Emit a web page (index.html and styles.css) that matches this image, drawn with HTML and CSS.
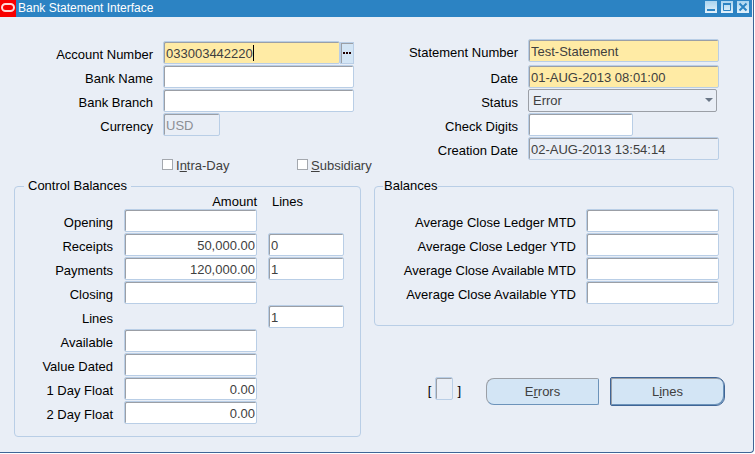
FILE: index.html
```html
<!DOCTYPE html>
<html lang="en">
<head>
    <meta charset="UTF-8">
    <title>Bank Statement Interface</title>
    <link rel="stylesheet" href="styles.css">
</head>
<body>
    <div class="window">
        <div class="title-bar">
            <svg class="logo" width="16" height="17" viewBox="0 0 16 17">
                <rect width="16" height="17" fill="#f80000"/>
                <rect x="2" y="4" width="12" height="7" rx="3.5" fill="none" stroke="#ffd9d9" stroke-width="2"/>
            </svg>
            <h1>Bank Statement Interface</h1>
            <div class="window-buttons">
                <button type="button" aria-label="Minimize">
                    <svg width="12" height="12" viewBox="0 0 12 12"><path d="M2 9h8" stroke="#2c83c3" stroke-width="2"/></svg>
                </button>
                <button type="button" aria-label="Maximize">
                    <svg width="12" height="12" viewBox="0 0 12 12"><path d="M2.5 3v6.5h7V3" fill="none" stroke="#2c83c3"/><path d="M2 3h8" stroke="#2c83c3" stroke-width="2"/></svg>
                </button>
                <button type="button" aria-label="Close">
                    <svg width="12" height="12" viewBox="0 0 12 12"><path d="M2.5 2.5l7 7M9.5 2.5l-7 7" stroke="#2c83c3" stroke-width="2"/></svg>
                </button>
            </div>
        </div>

        <form class="content">
            <div class="columns">
                <div class="account">
                    <div class="row">
                        <label for="account-number">Account Number</label>
                        <div class="lov">
                            <input class="required" id="account-number" type="text" value="033003442220">
                            <span class="caret"></span>
                            <button class="lov-button" type="button" aria-label="List of values">
                                <svg width="8" height="2" viewBox="0 0 8 2"><path d="M0 0h2v2H0zM3 0h2v2H3zM6 0h2v2H6z" fill="#200"/></svg>
                            </button>
                        </div>
                    </div>
                    <div class="row">
                        <label for="bank-name">Bank Name</label>
                        <input id="bank-name" type="text">
                    </div>
                    <div class="row">
                        <label for="bank-branch">Bank Branch</label>
                        <input id="bank-branch" type="text">
                    </div>
                    <div class="row">
                        <label for="currency">Currency</label>
                        <input class="short" id="currency" type="text" value="USD" disabled>
                    </div>
                    <div class="checks">
                        <label><input type="checkbox"><span>I<u>n</u>tra-Day</span></label>
                        <label><input type="checkbox"><span><u>S</u>ubsidiary</span></label>
                    </div>
                </div>

                <div class="statement">
                    <div class="row first">
                        <label for="statement-number">Statement Number</label>
                        <input class="required" id="statement-number" type="text" value="Test-Statement">
                    </div>
                    <div class="row">
                        <label for="date">Date</label>
                        <input class="required" id="date" type="text" value="01-AUG-2013 08:01:00">
                    </div>
                    <div class="row">
                        <label for="status">Status</label>
                        <div class="select">
                            <select id="status">
                                <option>Error</option>
                            </select>
                            <svg class="arrow" width="8" height="4" viewBox="0 0 8 4"><path d="M0 0h8L4 4z" fill="#6a7686"/></svg>
                        </div>
                    </div>
                    <div class="row">
                        <label for="check-digits">Check Digits</label>
                        <input class="medium" id="check-digits" type="text">
                    </div>
                    <div class="row">
                        <label for="creation-date">Creation Date</label>
                        <input id="creation-date" type="text" value="02-AUG-2013 13:54:14" readonly>
                    </div>
                </div>
            </div>

            <div class="columns">
                <fieldset class="control-balances">
                    <legend>Control Balances</legend>
                    <div class="balance-row heading">
                        <span></span>
                        <span class="amount-heading">Amount</span>
                        <span class="lines-heading">Lines</span>
                    </div>
                    <div class="balance-row">
                        <label for="opening">Opening</label>
                        <input id="opening" class="number" type="text">
                    </div>
                    <div class="balance-row">
                        <label for="receipts">Receipts</label>
                        <input id="receipts" class="number" type="text" value="50,000.00">
                        <input type="text" value="0" aria-label="Receipts lines">
                    </div>
                    <div class="balance-row">
                        <label for="payments">Payments</label>
                        <input id="payments" class="number" type="text" value="120,000.00">
                        <input type="text" value="1" aria-label="Payments lines">
                    </div>
                    <div class="balance-row">
                        <label for="closing">Closing</label>
                        <input id="closing" class="number" type="text">
                    </div>
                    <div class="balance-row">
                        <label for="total-lines">Lines</label>
                        <span></span>
                        <input id="total-lines" type="text" value="1">
                    </div>
                    <div class="balance-row">
                        <label for="available">Available</label>
                        <input id="available" class="number" type="text">
                    </div>
                    <div class="balance-row">
                        <label for="value-dated">Value Dated</label>
                        <input id="value-dated" class="number" type="text">
                    </div>
                    <div class="balance-row">
                        <label for="float-1">1 Day Float</label>
                        <input id="float-1" class="number" type="text" value="0.00">
                    </div>
                    <div class="balance-row">
                        <label for="float-2">2 Day Float</label>
                        <input id="float-2" class="number" type="text" value="0.00">
                    </div>
                </fieldset>

                <div class="side">
                    <fieldset class="balances">
                        <legend>Balances</legend>
                        <div class="average-row">
                            <label for="ledger-mtd">Average Close Ledger MTD</label>
                            <input id="ledger-mtd" class="number" type="text">
                        </div>
                        <div class="average-row">
                            <label for="ledger-ytd">Average Close Ledger YTD</label>
                            <input id="ledger-ytd" class="number" type="text">
                        </div>
                        <div class="average-row">
                            <label for="available-mtd">Average Close Available MTD</label>
                            <input id="available-mtd" class="number" type="text">
                        </div>
                        <div class="average-row">
                            <label for="available-ytd">Average Close Available YTD</label>
                            <input id="available-ytd" class="number" type="text">
                        </div>
                    </fieldset>

                    <div class="actions">
                        <div class="flexfield">
                            <span>[</span>
                            <input type="text" aria-label="Additional information" readonly>
                            <span>]</span>
                        </div>
                        <button class="action errors" type="button"><span>E<u>r</u>rors</span></button>
                        <button class="action default" type="button"><span>L<u>i</u>nes</span></button>
                    </div>
                </div>
            </div>
        </form>
    </div>
</body>
</html>
```
FILE: styles.css
```css
* {
    box-sizing: border-box;
}

body {
    margin: 0;
    background: #fff;
    font-family: "Liberation Sans", Arial, sans-serif;
    font-size: 13px;
    line-height: 16px;
    color: #000;
}

.window {
    margin-right: 1px;
    padding-bottom: 15px;
    background: #e9eef6;
    border-right: 1px solid #3f6596;
    border-bottom: 1px solid #3f6596;
    border-bottom-right-radius: 4px;
}

.title-bar {
    display: flex;
    align-items: center;
    height: 17px;
    margin-right: 1px;
    padding-right: 3px;
    background: #2c83c3;
    color: #fff;
}

.title-bar h1 {
    flex: 1;
    margin: 0 0 2px 2px;
    font-size: 12px;
    font-weight: normal;
}

.window-buttons {
    display: flex;
    gap: 4px;
    margin-bottom: 3px;
}

.window-buttons button {
    display: block;
    height: 12px;
    padding: 0;
    border: none;
    background: linear-gradient(#a9d3ef, #e4f2fb);
}

.window-buttons svg {
    display: block;
}

.content {
    padding: 0 19px 0 14px;
}

.columns {
    display: grid;
    grid-template-columns: minmax(0, 347fr) minmax(0, 360fr);
    gap: 13px;
}

input,
select {
    width: 100%;
    height: 23px;
    margin: 0;
    padding: 1px 2px 0;
    border: 1px solid #b9cee6;
    border-radius: 2px;
    background: #fff;
    box-shadow: inset 1px 1px 0 #9b9fa6;
    font: inherit;
    color: #404040;
    outline: none;
}

input[readonly],
input:disabled {
    background: #e9eef6;
}

input:disabled {
    color: #8c8f94;
}

input.required {
    background: #ffeba5;
}

input.short {
    width: 57px;
}

input.medium {
    width: 105px;
}

input.number {
    padding-right: 1px;
    text-align: right;
}

.row {
    display: grid;
    grid-template-columns: 1fr 191px;
    gap: 10px;
    align-items: center;
    margin-bottom: 1px;
}

.row label,
.balance-row label,
.average-row label {
    padding-top: 4px;
    text-align: right;
}

.account {
    padding: 24px 7px 0 0;
}

.statement {
    padding: 22px 15px 0 0;
}

.row.first {
    margin-bottom: 3px;
}

/* list of values field */
.lov {
    display: flex;
    position: relative;
}

.lov input {
    flex: 1;
    min-width: 0;
}

.caret {
    position: absolute;
    left: 90px;
    top: 4px;
    width: 1px;
    height: 16px;
    background: #000;
}

.lov-button {
    display: flex;
    align-items: center;
    justify-content: center;
    width: 14px;
    height: 22px;
    margin-top: 1px;
    padding: 0;
    border: 1px solid #b9cee6;
    background: #d3e5f5;
    box-shadow: inset 1px 1px 0 #9b9fa6;
}

.select {
    position: relative;
    padding-right: 2px;
}

.select select {
    display: block;
    padding-left: 4px;
    border-color: #9b9fa6;
    background: #e9eef6;
    box-shadow: none;
    appearance: none;
}

.arrow {
    position: absolute;
    right: 6px;
    top: 9px;
}

.checks {
    display: grid;
    grid-template-columns: 135px 1fr;
    margin: 22px 0 0 148px;
    color: #404040;
    white-space: nowrap;
}

.checks label {
    display: flex;
    align-items: center;
    gap: 3px;
}

.checks input {
    flex: none;
    width: 11px;
    height: 11px;
    margin-bottom: 4px;
    padding: 0;
    border: 1px solid #a4a8ae;
    border-radius: 0;
    box-shadow: none;
    appearance: none;
}

fieldset {
    min-width: 0;
    margin: 0;
    padding: 0;
    border: 1px solid #b9cee6;
    border-radius: 4px;
}

legend {
    margin-left: 9px;
    padding: 0 4px;
}

.control-balances {
    margin-top: 4px;
    padding-bottom: 11px;
}

.balance-row {
    display: grid;
    grid-template-columns: 1fr 133px 76px;
    column-gap: 11px;
    align-items: center;
    height: 23px;
    margin: 0 16px 1px 0;
}

.balance-row.heading {
    height: 14px;
}

.amount-heading {
    text-align: right;
}

.lines-heading {
    padding-left: 4px;
}

.side {
    padding-top: 4px;
}

.balances {
    padding: 15px 14px 20px 0;
}

.balances legend {
    margin-left: 8px;
    padding: 0 1px;
}

.average-row {
    display: grid;
    grid-template-columns: 1fr 133px;
    gap: 10px;
    align-items: center;
    margin-bottom: 1px;
}

.actions {
    display: flex;
    justify-content: flex-end;
    align-items: center;
    gap: 11px;
    margin: 51px 9px 0 0;
}

.flexfield {
    display: flex;
    align-items: center;
    gap: 4px;
    margin: 0 14px 6px 0;
}

.flexfield span {
    padding-top: 4px;
}

.flexfield input {
    width: 18px;
}

.action {
    width: 113px;
    height: 27px;
    padding: 0;
    border: 1px solid #6c93ba;
    border-top-color: #9b9fa6;
    background: #d3e5f5;
    font: inherit;
    color: #404040;
}

.errors {
    border-left-color: #9b9fa6;
    border-radius: 8px 2px 2px 8px;
}

.default {
    width: 115px;
    height: 29px;
    border: 1px solid #3f6596;
    border-radius: 2px 9px 9px 2px;
    box-shadow: inset 1px 1px 0 #9b9fa6, inset -1px -1px 0 #6c93ba;
}
```
